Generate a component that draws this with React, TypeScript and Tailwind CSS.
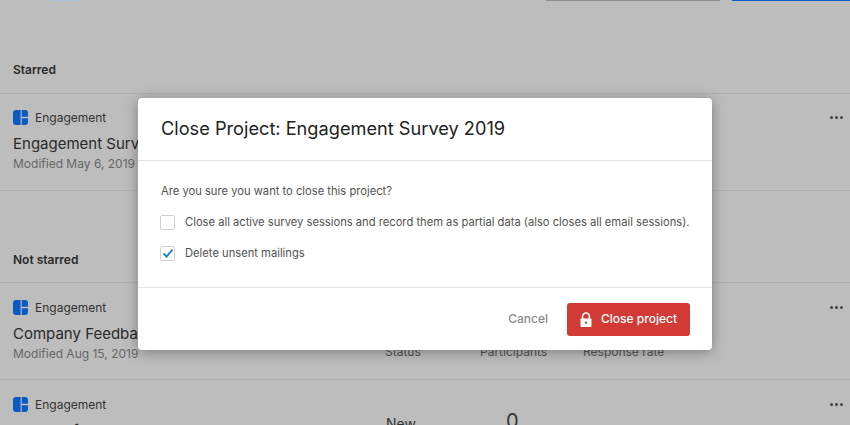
const FONT = "font-['Inter','Liberation_Sans',sans-serif]";

function BrandIcon() {
  return (
    <svg width="15" height="15" viewBox="0 0 15 15" className="shrink-0">
      <path
        d="M3 0h4.6v15H3a3 3 0 0 1-3-3V3a3 3 0 0 1 3-3zM8.7 0H12a3 3 0 0 1 3 3v3.8H8.7zM8.7 8.2H15V12a3 3 0 0 1-3 3H8.7z"
        fill="#0a5ac0"
      />
    </svg>
  );
}

function Dots() {
  return (
    <div className="flex gap-[2px]">
      <span className="h-[3px] w-[3px] rounded-full bg-[#444]" />
      <span className="h-[3px] w-[3px] rounded-full bg-[#444]" />
      <span className="h-[3px] w-[3px] rounded-full bg-[#444]" />
    </div>
  );
}

function ProjectRow({ title, modified, className, children }: { title: string; modified?: string; className: string; children?: React.ReactNode }) {
  return (
    <div className={`relative border-b border-[#b0b0b0] pl-[13px] pr-[7px] ${className}`}>
      <div className="flex items-center justify-between">
        <div className="flex items-center gap-[7px]">
          <BrandIcon />
          <span className="text-[12px] leading-[15px] text-[#333]">Engagement</span>
        </div>
        <Dots />
      </div>
      <div className="mt-[9px] text-[15px] leading-[20px] text-[#2a2a2a]">{title}</div>
      {modified && <div className="mt-[2px] text-[12px] leading-[16px] text-[#666]">{modified}</div>}
      {children}
    </div>
  );
}

function SectionLabel({ children, className }: { children: string; className: string }) {
  return (
    <div className={`border-b border-[#b0b0b0] pl-[13px] text-[12px] font-semibold leading-[16px] text-[#2a2a2a] ${className}`}>
      {children}
    </div>
  );
}

function Check({ checked, label }: { checked?: boolean; label: string }) {
  return (
    <label className="flex items-center gap-[10px]">
      <span className="flex h-[15px] w-[15px] shrink-0 items-center justify-center rounded-[2px] border border-[#cfcfcf] bg-white">
        {checked && (
          <svg width="12" height="12" viewBox="0 0 12 12">
            <path d="M1.5 6.5L4.6 9.6L10.5 2.6" fill="none" stroke="#1a7fd0" strokeWidth="1.8" />
          </svg>
        )}
      </span>
      <span className="whitespace-nowrap text-[11.2px] leading-[16px] text-[#525252]">{label}</span>
    </label>
  );
}

export default function App() {
  return (
    <div className={`relative h-[425px] w-[850px] overflow-hidden bg-[#bdbdbd] ${FONT}`}>
      {/* top bar remnants */}
      <div className="flex h-[1px] items-start">
        <div className="ml-[52px] h-[1px] w-[29px] bg-[#a9c4e0]" />
        <div className="ml-[465px] h-[1px] w-[174px] bg-[#8f8f8f]" />
        <div className="ml-[12px] h-[1px] w-[118px] bg-[#0a5fc4]" />
      </div>

      <SectionLabel className="pb-[15px] pt-[61px]">Starred</SectionLabel>
      <ProjectRow title="Engagement Survey 2019" modified="Modified May 6, 2019" className="h-[97px] pt-[16px]" />

      <SectionLabel className="pb-[14px] pt-[61px]">Not starred</SectionLabel>
      <ProjectRow title="Company Feedback" modified="Modified Aug 15, 2019" className="h-[97px] pt-[17px]">
        <div className="absolute left-[385px] top-[61px] text-[12px] leading-[16px] text-[#555]">Status</div>
        <div className="absolute left-[480px] top-[61px] text-[12px] leading-[16px] text-[#555]">Participants</div>
        <div className="absolute left-[583px] top-[61px] text-[12px] leading-[16px] text-[#555]">Response rate</div>
      </ProjectRow>
      <ProjectRow title="Contact feedback" className="h-[60px] pt-[17px]">
        <div className="absolute left-[386px] top-[34px] text-[14px] leading-[20px] text-[#333]">New</div>
        <div className="absolute left-[506px] top-[28px] text-[20px] leading-[26px] text-[#333]">0</div>
      </ProjectRow>

      {/* modal */}
      <div className="absolute left-[138px] top-[98px] w-[574px] rounded-[4px] bg-white shadow-[0_2px_14px_rgba(0,0,0,0.35)]">
        <div className="flex h-[63px] items-center border-b border-[#e4e4e4] pl-[23px] text-[18.2px] text-[#222]">
          Close Project: Engagement Survey 2019
        </div>
        <div className="h-[127px] border-b border-[#e4e4e4] pl-[22px] pt-[22px]">
          <div className="pl-[1px] text-[11.2px] leading-[16px] text-[#525252]">Are you sure you want to close this project?</div>
          <div className="mt-[15px] flex flex-col gap-[15px]">
            <Check label="Close all active survey sessions and record them as partial data (also closes all email sessions)." />
            <Check checked label="Delete unsent mailings" />
          </div>
        </div>
        <div className="flex h-[62px] items-center justify-end gap-[19px] pr-[22px]">
          <span className="text-[12px] font-medium text-[#8a8a8a]">Cancel</span>
          <button
            type="button"
            className="flex h-[33px] w-[123px] items-center justify-center gap-[9px] rounded-[3px] bg-[#d13a35] text-[12px] font-medium text-white"
          >
            <svg width="12" height="15" viewBox="0 0 12 15">
              <path d="M2.6 7V4.4a3.4 3.4 0 0 1 6.8 0V7" fill="none" stroke="white" strokeWidth="1.5" />
              <path d="M0.5 6.5h11v7.5a1 1 0 0 1-1 1h-9a1 1 0 0 1-1-1z" fill="white" />
              <rect x="5" y="9.6" width="2" height="2" fill="#d13a35" />
            </svg>
            Close project
          </button>
        </div>
      </div>
    </div>
  );
}
